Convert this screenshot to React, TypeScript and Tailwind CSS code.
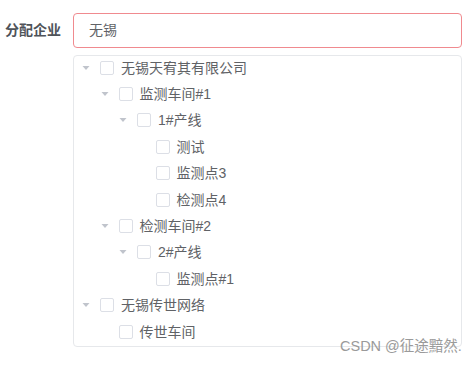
type Node = { label: string; level: number; expandable: boolean }

const nodes: Node[] = [
  { label: '无锡天宥其有限公司', level: 0, expandable: true },
  { label: '监测车间#1', level: 1, expandable: true },
  { label: '1#产线', level: 2, expandable: true },
  { label: '测试', level: 3, expandable: false },
  { label: '监测点3', level: 3, expandable: false },
  { label: '检测点4', level: 3, expandable: false },
  { label: '检测车间#2', level: 1, expandable: true },
  { label: '2#产线', level: 2, expandable: true },
  { label: '监测点#1', level: 3, expandable: false },
  { label: '无锡传世网络', level: 0, expandable: true },
  { label: '传世车间', level: 1, expandable: false },
]

function Caret() {
  return (
    <svg width="8" height="6" viewBox="0 0 8 6" className="block">
      <path d="M0.5 1 L7.5 1 L4 5 Z" fill="#c0c4cc" />
    </svg>
  )
}

export default function App() {
  return (
    <div
      className="relative w-[474px] h-[365px] bg-white antialiased"
      style={{ fontFamily: '"Liberation Sans", "Noto Sans CJK SC", sans-serif' }}
    >
      <div className="flex items-start pt-[13px]">
        <div className="w-[73px] pl-[5px] h-[35px] flex items-center text-[14px] font-bold text-[#4f5359]">
          分配企业
        </div>
        <div className="flex flex-col w-[389px]">
          <div className="h-[35px] border border-[#f08a8f] rounded-[4px] flex items-center pl-[15px] text-[14px] text-[#606266]">
            无锡
          </div>
          <div className="mt-[7px] border border-[#e6e8eb] rounded-[4px] overflow-hidden">
            <div className="-mt-[1.5px] pb-[1.5px]">
              {nodes.map((n, i) => (
                <div
                  key={i}
                  className="h-[26.4px] flex items-center text-[14px] text-[#606266]"
                  style={{ paddingLeft: n.level * 18.5 }}
                >
                  <div className="w-[24px] flex justify-center items-center">
                    {n.expandable && <Caret />}
                  </div>
                  <div className="ml-[2px] w-[14px] h-[14px] border border-[#dcdfe6] rounded-[2px] bg-white" />
                  <span className="ml-[7px] leading-none">{n.label}</span>
                </div>
              ))}
            </div>
          </div>
        </div>
      </div>
      <div className="absolute left-[340px] top-[339px] text-[14.5px] text-[#9a9a9a] leading-none whitespace-nowrap">
        CSDN @征途黯然.
      </div>
    </div>
  )
}
